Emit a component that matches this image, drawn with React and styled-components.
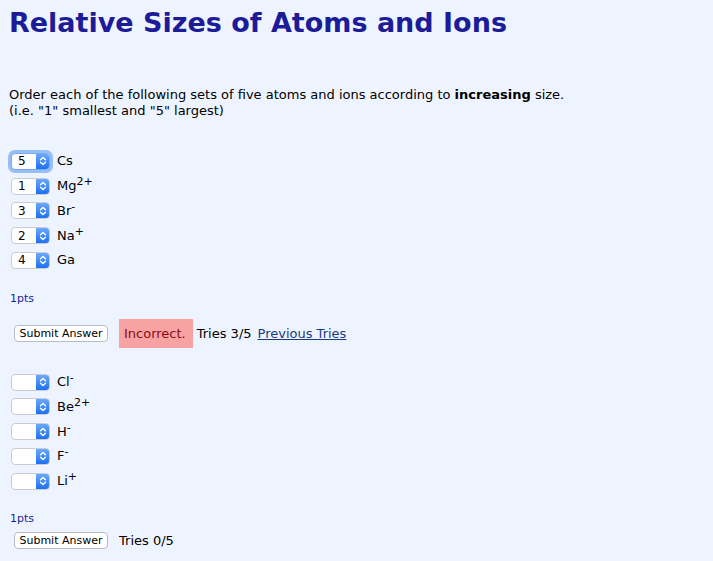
import React from 'react';
import styled, { createGlobalStyle, css } from 'styled-components';

const GlobalStyle = createGlobalStyle`
  html, body {
    margin: 0;
    padding: 0;
    background: #eef4ff;
  }
  body {
    font-family: "DejaVu Sans", Verdana, sans-serif;
    color: #000;
  }
`;

const Page = styled.div`
  padding: 0 9px;
  min-height: 561px;
  box-sizing: border-box;
`;

const Title = styled.h1`
  margin: 0;
  padding-top: 7px;
  font-size: 27px;
  line-height: 32px;
  font-weight: bold;
  color: #1c1c98;
`;

const Intro = styled.p`
  margin: 48px 0 0;
  font-size: 13px;
  line-height: 16px;
`;

const QuestionSet = styled.div`
  margin-top: ${({ $top }) => $top}px;
`;

const OptionList = styled.div`
  display: flex;
  flex-direction: column;
  padding-left: 2px;
`;

const OptionRow = styled.div`
  display: flex;
  align-items: center;
  height: 24.75px;
  gap: 7px;
`;

const Picker = styled.div`
  display: flex;
  width: 39px;
  height: 17px;
  box-sizing: border-box;
  border: 1px solid #c9ccd3;
  border-radius: 4px;
  background: #fff;
  overflow: hidden;
  ${({ $focused }) =>
    $focused &&
    css`
      box-shadow: 0 0 0 3px #97bef5;
      border-color: #7aa8ee;
    `}
`;

const PickerSelect = styled.select`
  appearance: none;
  -webkit-appearance: none;
  border: 0;
  outline: none;
  background: transparent;
  margin: 0;
  padding: 0 0 0 6px;
  width: 24px;
  height: 100%;
  font-family: "DejaVu Sans", Verdana, sans-serif;
  font-size: 12px;
  color: #000;
`;

const PickerArrow = styled.span`
  flex: 1;
  display: flex;
  align-items: center;
  justify-content: center;
  background: linear-gradient(#6aa9fb, #1d6ff2);
  pointer-events: none;
`;

const Species = styled.span`
  font-size: 13px;
  line-height: 16px;

  sup {
    font-size: 11px;
    line-height: 0;
    vertical-align: 5px;
  }
`;

const Points = styled.div`
  font-size: 11px;
  line-height: 14px;
  color: #1c1c98;
  margin-top: ${({ $top }) => $top}px;
  padding-left: 1px;
`;

const SubmitRow = styled.div`
  display: flex;
  align-items: center;
  margin-top: ${({ $top }) => $top}px;
  padding-left: 5px;
  height: 29px;
`;

const SubmitButton = styled.button`
  width: 94px;
  height: 17px;
  padding: 0;
  box-sizing: border-box;
  border: 1px solid #b9bcc2;
  border-radius: 4px;
  background: #fff;
  font-family: "DejaVu Sans", Verdana, sans-serif;
  font-size: 11px;
  color: #000;
`;

const Feedback = styled.span`
  display: flex;
  align-items: center;
  height: 29px;
  margin-left: 11px;
  padding: 0 7px 0 5px;
  background: #f9a2a4;
  color: #8a0c12;
  font-size: 13px;
`;

const Tries = styled.span`
  font-size: 13px;
  margin-left: ${({ $gap }) => $gap}px;
`;

const TriesLink = styled.a`
  color: #1a3a80;
  text-decoration: underline;
  margin-left: 6px;
  font-size: 13px;
`;

function Chevrons() {
  return (
    <svg width="8" height="10" viewBox="0 0 8 10" fill="none">
      <path d="M1.5 3.8 4 1.4 6.5 3.8" stroke="#fff" strokeWidth="1.4" strokeLinecap="round" strokeLinejoin="round" />
      <path d="M1.5 6.2 4 8.6 6.5 6.2" stroke="#fff" strokeWidth="1.4" strokeLinecap="round" strokeLinejoin="round" />
    </svg>
  );
}

function Option({ value, symbol, charge, focused }) {
  return (
    <OptionRow>
      <Picker $focused={focused}>
        <PickerSelect defaultValue={value || ''}>
          <option value=""></option>
          {[1, 2, 3, 4, 5].map((n) => (
            <option key={n} value={n}>{n}</option>
          ))}
        </PickerSelect>
        <PickerArrow>
          <Chevrons />
        </PickerArrow>
      </Picker>
      <Species>
        {symbol}
        {charge && <sup>{charge}</sup>}
      </Species>
    </OptionRow>
  );
}

const firstSet = [
  { value: '5', symbol: 'Cs', focused: true },
  { value: '1', symbol: 'Mg', charge: '2+' },
  { value: '3', symbol: 'Br', charge: '-' },
  { value: '2', symbol: 'Na', charge: '+' },
  { value: '4', symbol: 'Ga' },
];

const secondSet = [
  { symbol: 'Cl', charge: '-' },
  { symbol: 'Be', charge: '2+' },
  { symbol: 'H', charge: '-' },
  { symbol: 'F', charge: '-' },
  { symbol: 'Li', charge: '+' },
];

export default function App() {
  return (
    <>
      <GlobalStyle />
      <Page>
        <Title>Relative Sizes of Atoms and Ions</Title>
        <Intro>
          Order each of the following sets of five atoms and ions according to <b>increasing</b> size.
          <br />
          (i.e. "1" smallest and "5" largest)
        </Intro>

        <QuestionSet $top={30}>
          <OptionList>
            {firstSet.map((o) => (
              <Option key={o.symbol} {...o} />
            ))}
          </OptionList>
          <Points $top={19}>1pts</Points>
          <SubmitRow $top={13}>
            <SubmitButton>Submit Answer</SubmitButton>
            <Feedback>Incorrect.</Feedback>
            <Tries $gap={4}>Tries 3/5</Tries>
            <TriesLink href="#">Previous Tries</TriesLink>
          </SubmitRow>
        </QuestionSet>

        <QuestionSet $top={22}>
          <OptionList>
            {secondSet.map((o) => (
              <Option key={o.symbol} {...o} />
            ))}
          </OptionList>
          <Points $top={18}>1pts</Points>
          <SubmitRow $top={0}>
            <SubmitButton>Submit Answer</SubmitButton>
            <Tries $gap={11}>Tries 0/5</Tries>
          </SubmitRow>
        </QuestionSet>
      </Page>
    </>
  );
}
